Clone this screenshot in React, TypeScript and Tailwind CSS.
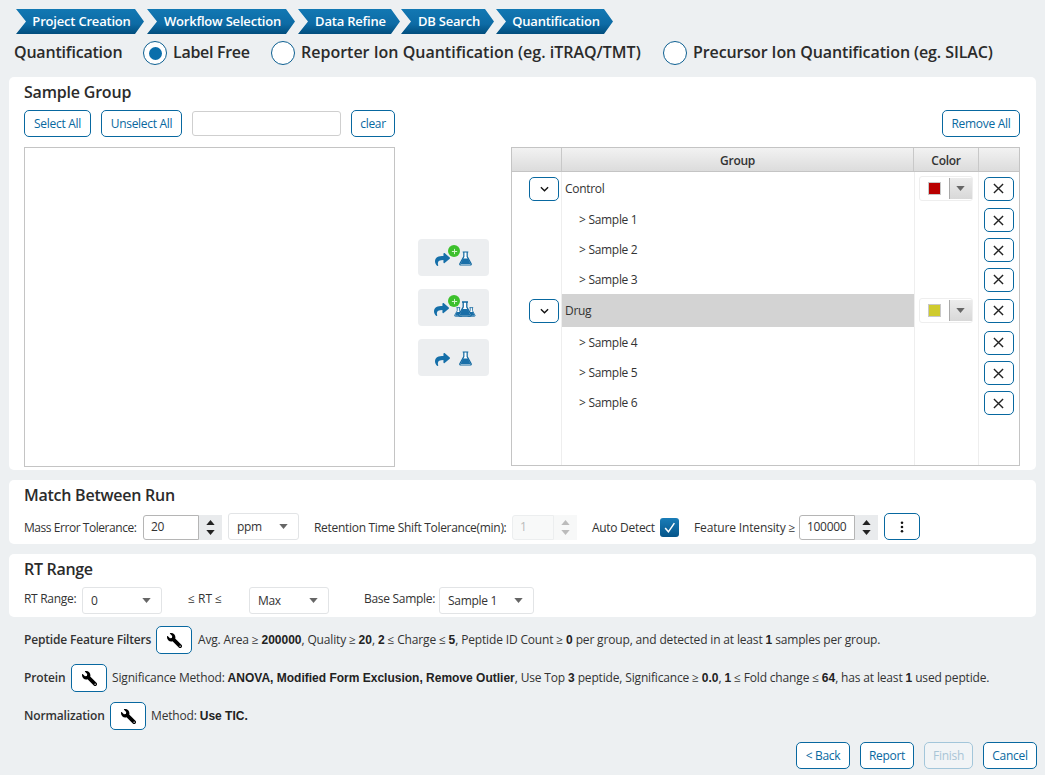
import React from "react";
import { FaShare, FaWrench } from "react-icons/fa";

const steps = [
  { label: "Project Creation", w: "w-[128px] ml-[3px]" },
  { label: "Workflow Selection", w: "w-[148px] ml-[3px]" },
  { label: "Data Refine", w: "w-[102px] ml-[3px]" },
  { label: "DB Search", w: "w-[93px] ml-[1px]" },
  { label: "Quantification", w: "w-[117px] ml-[2px]" },
];

const Btn = ({ children, className = "" }: { children: React.ReactNode; className?: string }) => (
  <button className={`h-[27px] border border-[#0868a0] rounded-[5px] bg-white text-[#0868a0] text-[12px] flex items-center justify-center ${className}`}>
    {children}
  </button>
);

const Radio = ({ on = false }: { on?: boolean }) => (
  <span className="w-[24px] h-[24px] rounded-full border border-[#0d5f91] bg-white flex items-center justify-center shrink-0">
    {on && <span className="w-[13px] h-[13px] rounded-full bg-[#0a6eab]" />}
  </span>
);

const Caret = ({ className = "" }: { className?: string }) => (
  <svg viewBox="0 0 10 6" className={`w-[9px] h-[5px] ${className}`}>
    <path d="M0 0h10L5 6z" fill="#666" />
  </svg>
);

const Select = ({ value, className = "" }: { value: string; className?: string }) => (
  <div className={`h-[27px] border border-[#e2e4e6] rounded-[3px] bg-white flex items-center justify-between pl-[8px] pr-[10px] text-[12px] text-[#333] ${className}`}>
    <span className="pt-[1px]">{value}</span>
    <Caret />
  </div>
);

const Spinner = ({ value, disabled = false, w }: { value: string; disabled?: boolean; w: string }) => (
  <div className={`flex h-[25px] mt-[1px] ${w}`}>
    <div className={`flex-1 border rounded-l-[3px] flex items-center text-[12px] pl-[7px] ${disabled ? "border-[#eceeef] bg-[#f8f9f9] text-[#bbb]" : "border-[#b5b5b5] bg-white text-[#333]"}`}>
      {value}
    </div>
    <div className={`w-[23px] flex flex-col items-center justify-center gap-[5px] ${disabled ? "bg-[#f7f8f8]" : "bg-[#e9ebed]"}`}>
      <svg viewBox="0 0 10 6" className="w-[9px] h-[5px]"><path d="M5 0l5 6H0z" fill={disabled ? "#bbb" : "#222"} /></svg>
      <svg viewBox="0 0 10 6" className="w-[9px] h-[5px]"><path d="M0 0h10L5 6z" fill={disabled ? "#bbb" : "#222"} /></svg>
    </div>
  </div>
);

const Flask = ({ x = 0, y = 0, s = 1 }: { x?: number; y?: number; s?: number }) => (
  <g transform={`translate(${x} ${y}) scale(${s})`}>
    <path d="M4 1h6M5.200 1v5L1 13.500c-.4.8 0 1.500 1 1.500h10c1 0 1.400-.7 1-1.500L8.800 6V1" fill="#fff" stroke="#1268a0" strokeWidth="1.300" />
    <path d="M4.200 8h5.600l2.600 6H1.600z" fill="#1a6fa8" />
  </g>
);

const ActionBtn = ({ plus = false, many = false }: { plus?: boolean; many?: boolean }) => (
  <button className="relative w-[71px] h-[37px] rounded-[4px] bg-[#eceef0] flex items-center justify-center gap-[9px] pr-[1px]">
    <FaShare className="text-[#156fa9] text-[15px] mt-[3px]" />
    <svg viewBox={many ? "0 0 24 16" : "0 0 14 16"} className={many ? "h-[16px] w-[24px] mt-[2px] -ml-[5px] -mr-[5px]" : "h-[15px] w-[13px] mt-[2px]"}>
      {many && <Flask x={1} y={6} s={0.62} />}
      {many && <Flask x={14} y={6} s={0.62} />}
      <Flask x={many ? 5 : 0} y={0} s={1} />
    </svg>
    {plus && (
      <span className="absolute left-[30px] top-[6px] w-[12px] h-[12px] rounded-full bg-[#3cc02c] flex items-center justify-center">
        <svg viewBox="0 0 8 8" className="w-[7px] h-[7px]"><path d="M4 1v6M1 4h6" stroke="#d6f5d0" strokeWidth="1.100" /></svg>
      </span>
    )}
  </button>
);

const XBtn = () => (
  <button className="w-[30px] h-[24px] border border-[#0868a0] rounded-[5px] bg-white flex items-center justify-center">
    <svg viewBox="0 0 12 12" className="w-[11px] h-[11px]"><path d="M1 1l10 10M11 1L1 11" stroke="#222" strokeWidth="1.500" /></svg>
  </button>
);

const Chevron = () => (
  <button className="w-[30px] h-[24px] border border-[#0868a0] rounded-[5px] bg-white flex items-center justify-center">
    <svg viewBox="0 0 10 6" className="w-[9px] h-[6px]"><path d="M1 1l4 4 4-4" fill="none" stroke="#111" strokeWidth="1.500" /></svg>
  </button>
);

const ColorPick = ({ color }: { color: string }) => (
  <div className="w-[54px] h-[25px] border border-[#eeeeee] rounded-[3px] bg-white flex items-center pl-[8px] -ml-[2px]">
    <span className="w-[13px] h-[13px] border border-[#c8c8c8]" style={{ background: color }} />
    <span className="ml-[8px] w-[23px] h-[21px] border-l border-[#aaa] bg-gradient-to-b from-[#ececec] to-[#d8d8d8] flex items-center justify-center">
      <Caret />
    </span>
  </div>
);

const rows = [
  { label: "Control", h: "h-[33px]", parent: true, color: "#b90000" },
  { label: "Sample 1", h: "h-[30px]" },
  { label: "Sample 2", h: "h-[30px]" },
  { label: "Sample 3", h: "h-[29px]" },
  { label: "Drug", h: "h-[33px]", parent: true, color: "#cfcb2e", selected: true },
  { label: "Sample 4", h: "h-[31px]" },
  { label: "Sample 5", h: "h-[30px]" },
  { label: "Sample 6", h: "h-[30px]" },
];

const Wrench = () => (
  <button className="w-[36px] h-[28px] border border-[#0868a0] rounded-[5px] bg-white flex items-center justify-center shrink-0">
    <FaWrench className="text-[15px] text-black -scale-x-100" />
  </button>
);

const B = ({ children }: { children: React.ReactNode }) => (
  <b className="font-['Liberation_Sans',sans-serif] font-bold text-[#222] tracking-normal">{children}</b>
);

export default function App() {
  return (
    <div className="w-[1045px] h-[775px] overflow-hidden bg-[#edf0f2] font-['Open_Sans',sans-serif] text-[#333] text-[12px] tracking-[-0.3px] flex flex-col">
      {/* wizard steps */}
      <div className="flex pl-[13px] pt-[9px] h-[34px] shrink-0">
        {steps.map((s) => (
          <div
            key={s.label}
            className={`${s.w} h-[25px] shrink-0 bg-gradient-to-b from-[#1278b3] via-[#0d6ba5] via-60% to-[#024e7e] [clip-path:polygon(0_0,calc(100%-9px)_0,100%_50%,calc(100%-9px)_100%,0_100%,10px_50%)] text-white text-[13px] font-semibold tracking-[-0.2px] flex items-center justify-center pl-[3px]`}
          >
            {s.label}
          </div>
        ))}
      </div>

      {/* quantification type */}
      <div className="flex items-center h-[24px] mt-[7px] pl-[14px] text-[16px] font-semibold text-[#2b2b2b] shrink-0">
        <span className="w-[129px] pb-[2px] tracking-[-0.2px]">Quantification</span>
        <Radio on />
        <span className="ml-[6px] w-[98px] pb-[2px] tracking-[-0.3px]">Label Free</span>
        <Radio />
        <span className="ml-[6px] w-[362px] pb-[2px] tracking-normal">Reporter Ion Quantification (eg. iTRAQ/TMT)</span>
        <Radio />
        <span className="ml-[6px] pb-[2px] tracking-[-0.1px]">Precursor Ion Quantification (eg. SILAC)</span>
      </div>

      {/* sample group */}
      <div className="mx-[9px] mt-[12px] h-[393px] shrink-0 bg-white rounded-[5px] px-[15px] pt-[5px] flex flex-col">
        <div className="text-[16px] font-semibold text-[#2b2b2b] leading-[20px] tracking-[-0.2px]">Sample Group</div>
        <div className="flex items-center mt-[8px] gap-[10px]">
          <Btn className="w-[67px]">Select All</Btn>
          <Btn className="w-[81px]">Unselect All</Btn>
          <input className="w-[149px] h-[25px] border border-[#cfcfcf] rounded-[3px] bg-white" />
          <Btn className="w-[44px]">clear</Btn>
          <Btn className="w-[78px] ml-auto mr-[1px]">Remove All</Btn>
        </div>
        <div className="flex mt-[10px] items-start">
          <div className="w-[371px] h-[320px] border border-[#c4c4c4] bg-white shrink-0" />
          <div className="w-[116px] shrink-0 flex flex-col items-center gap-[13px] pt-[92px] pl-[1px]">
            <ActionBtn plus />
            <ActionBtn plus many />
            <ActionBtn />
          </div>
          <div className="w-[509px] h-[319px] border border-[#c4c4c4] shrink-0 flex flex-col">
            <div className="flex h-[24px] shrink-0 bg-gradient-to-b from-[#f2f2f2] to-[#dcdcdc] border-b border-[#c4c4c4] font-semibold text-[#333] text-center leading-[25px]">
              <div className="w-[50px] border-r border-[#c8c8c8]" />
              <div className="w-[352px] border-r border-[#c8c8c8]">Group</div>
              <div className="w-[65px] border-r border-[#c8c8c8]">Color</div>
              <div className="flex-1" />
            </div>
            <div className="flex-1 flex flex-col">
              {rows.map((r) => (
                <div key={r.label} className={`flex ${r.h} shrink-0`}>
                  <div className="w-[50px] border-r border-[#eeeeee] flex items-center justify-end pr-[2px]">
                    {r.parent && <Chevron />}
                  </div>
                  <div className={`w-[352px] flex items-center ${r.selected ? "bg-[#d3d3d3] pt-[1px]" : ""} ${r.parent ? "pl-[3px]" : "pl-[17px]"}`}>
                    {r.parent ? r.label : `> ${r.label}`}
                  </div>
                  <div className="w-[65px] border-x border-[#eeeeee] flex items-center justify-center">
                    {r.color && <ColorPick color={r.color} />}
                  </div>
                  <div className="flex-1 flex items-center justify-center pr-[1px]">
                    <XBtn />
                  </div>
                </div>
              ))}
              <div className="flex flex-1">
                <div className="w-[50px] border-r border-[#eeeeee]" />
                <div className="w-[352px]" />
                <div className="w-[65px] border-x border-[#eeeeee]" />
              </div>
            </div>
          </div>
        </div>
      </div>

      {/* match between run */}
      <div className="mx-[9px] mt-[10px] h-[64px] shrink-0 bg-white rounded-[5px] px-[15px] pt-[5px]">
        <div className="text-[16px] font-semibold text-[#2b2b2b] leading-[20px] tracking-[-0.25px]">Match Between Run</div>
        <div className="flex items-center mt-[8px] h-[27px]">
          <span className="w-[119px] pt-[3px] tracking-[-0.45px]">Mass Error Tolerance:</span>
          <Spinner value="20" w="w-[79px]" />
          <Select value="ppm" className="w-[71px] ml-[6px]" />
          <span className="ml-[15px] w-[198px] pt-[3px]">Retention Time Shift Tolerance(min):</span>
          <Spinner value="1" disabled w="w-[65px]" />
          <span className="ml-[15px] w-[68px] pt-[3px]">Auto Detect</span>
          <span className="w-[19px] h-[19px] mt-[1px] rounded-[3px] bg-gradient-to-b from-[#1a7db8] to-[#05558a] flex items-center justify-center">
            <svg viewBox="0 0 12 12" className="w-[13px] h-[13px]"><path d="M2 6.500l3 3.500 5.500-8" fill="none" stroke="#fff" strokeWidth="1.400" /></svg>
          </span>
          <span className="ml-[15px] w-[105px] pt-[3px] tracking-[-0.15px]">Feature Intensity ≥</span>
          <Spinner value="100000" w="w-[79px]" />
          <Btn className="w-[36px] ml-[6px]">
            <svg viewBox="0 0 4 14" className="w-[4px] h-[12px]"><g fill="#111"><circle cx="2" cy="2" r="1.500" /><circle cx="2" cy="7" r="1.500" /><circle cx="2" cy="12" r="1.500" /></g></svg>
          </Btn>
        </div>
      </div>

      {/* rt range */}
      <div className="mx-[9px] mt-[10px] h-[63px] shrink-0 bg-white rounded-[5px] px-[15px] pt-[5px]">
        <div className="text-[16px] font-semibold text-[#2b2b2b] leading-[20px]">RT Range</div>
        <div className="flex items-center mt-[8px] h-[27px]">
          <span className="w-[58px] pb-[3px]">RT Range:</span>
          <Select value="0" className="w-[80px]" />
          <span className="ml-[26px] w-[61px] pb-[3px] tracking-normal">≤ RT ≤</span>
          <Select value="Max" className="w-[80px]" />
          <span className="ml-[35px] w-[75px] pb-[3px]">Base Sample:</span>
          <Select value="Sample 1" className="w-[95px]" />
        </div>
      </div>

      {/* settings summary */}
      <div className="flex flex-col gap-[10px] pl-[24px] mt-[9px] tracking-[-0.16px]">
        <div className="flex items-center gap-[5px] h-[28px]">
          <span className="font-semibold w-[127px] whitespace-nowrap">Peptide Feature Filters</span>
          <Wrench />
          <span className="ml-[1px]">Avg. Area ≥ <B>200000</B>, Quality ≥ <B>20</B>, <B>2</B> ≤ Charge ≤ <B>5</B>, Peptide ID Count ≥ <B>0</B> per group, and detected in at least <B>1</B> samples per group.</span>
        </div>
        <div className="flex items-center gap-[5px] h-[28px]">
          <span className="font-semibold w-[42px]">Protein</span>
          <Wrench />
          <span>Significance Method: <B>ANOVA, Modified Form Exclusion, Remove Outlier</B>, Use Top <B>3</B> peptide, Significance ≥ <B>0.0</B>, <B>1</B> ≤ Fold change ≤ <B>64</B>, has at least <B>1</B> used peptide.</span>
        </div>
        <div className="flex items-center gap-[5px] h-[28px]">
          <span className="font-semibold w-[81px]">Normalization</span>
          <Wrench />
          <span>Method: <B>Use TIC.</B></span>
        </div>
      </div>

      {/* footer */}
      <div className="flex justify-end gap-[10px] pr-[8px] mt-[12px]">
        <Btn className="w-[54px]">&lt; Back</Btn>
        <Btn className="w-[54px]">Report</Btn>
        <Btn className="w-[49px] !border-[#a3c6da] !bg-[#f1f4f6] !text-[#a9c5d6]">Finish</Btn>
        <Btn className="w-[54px]">Cancel</Btn>
      </div>
    </div>
  );
}
